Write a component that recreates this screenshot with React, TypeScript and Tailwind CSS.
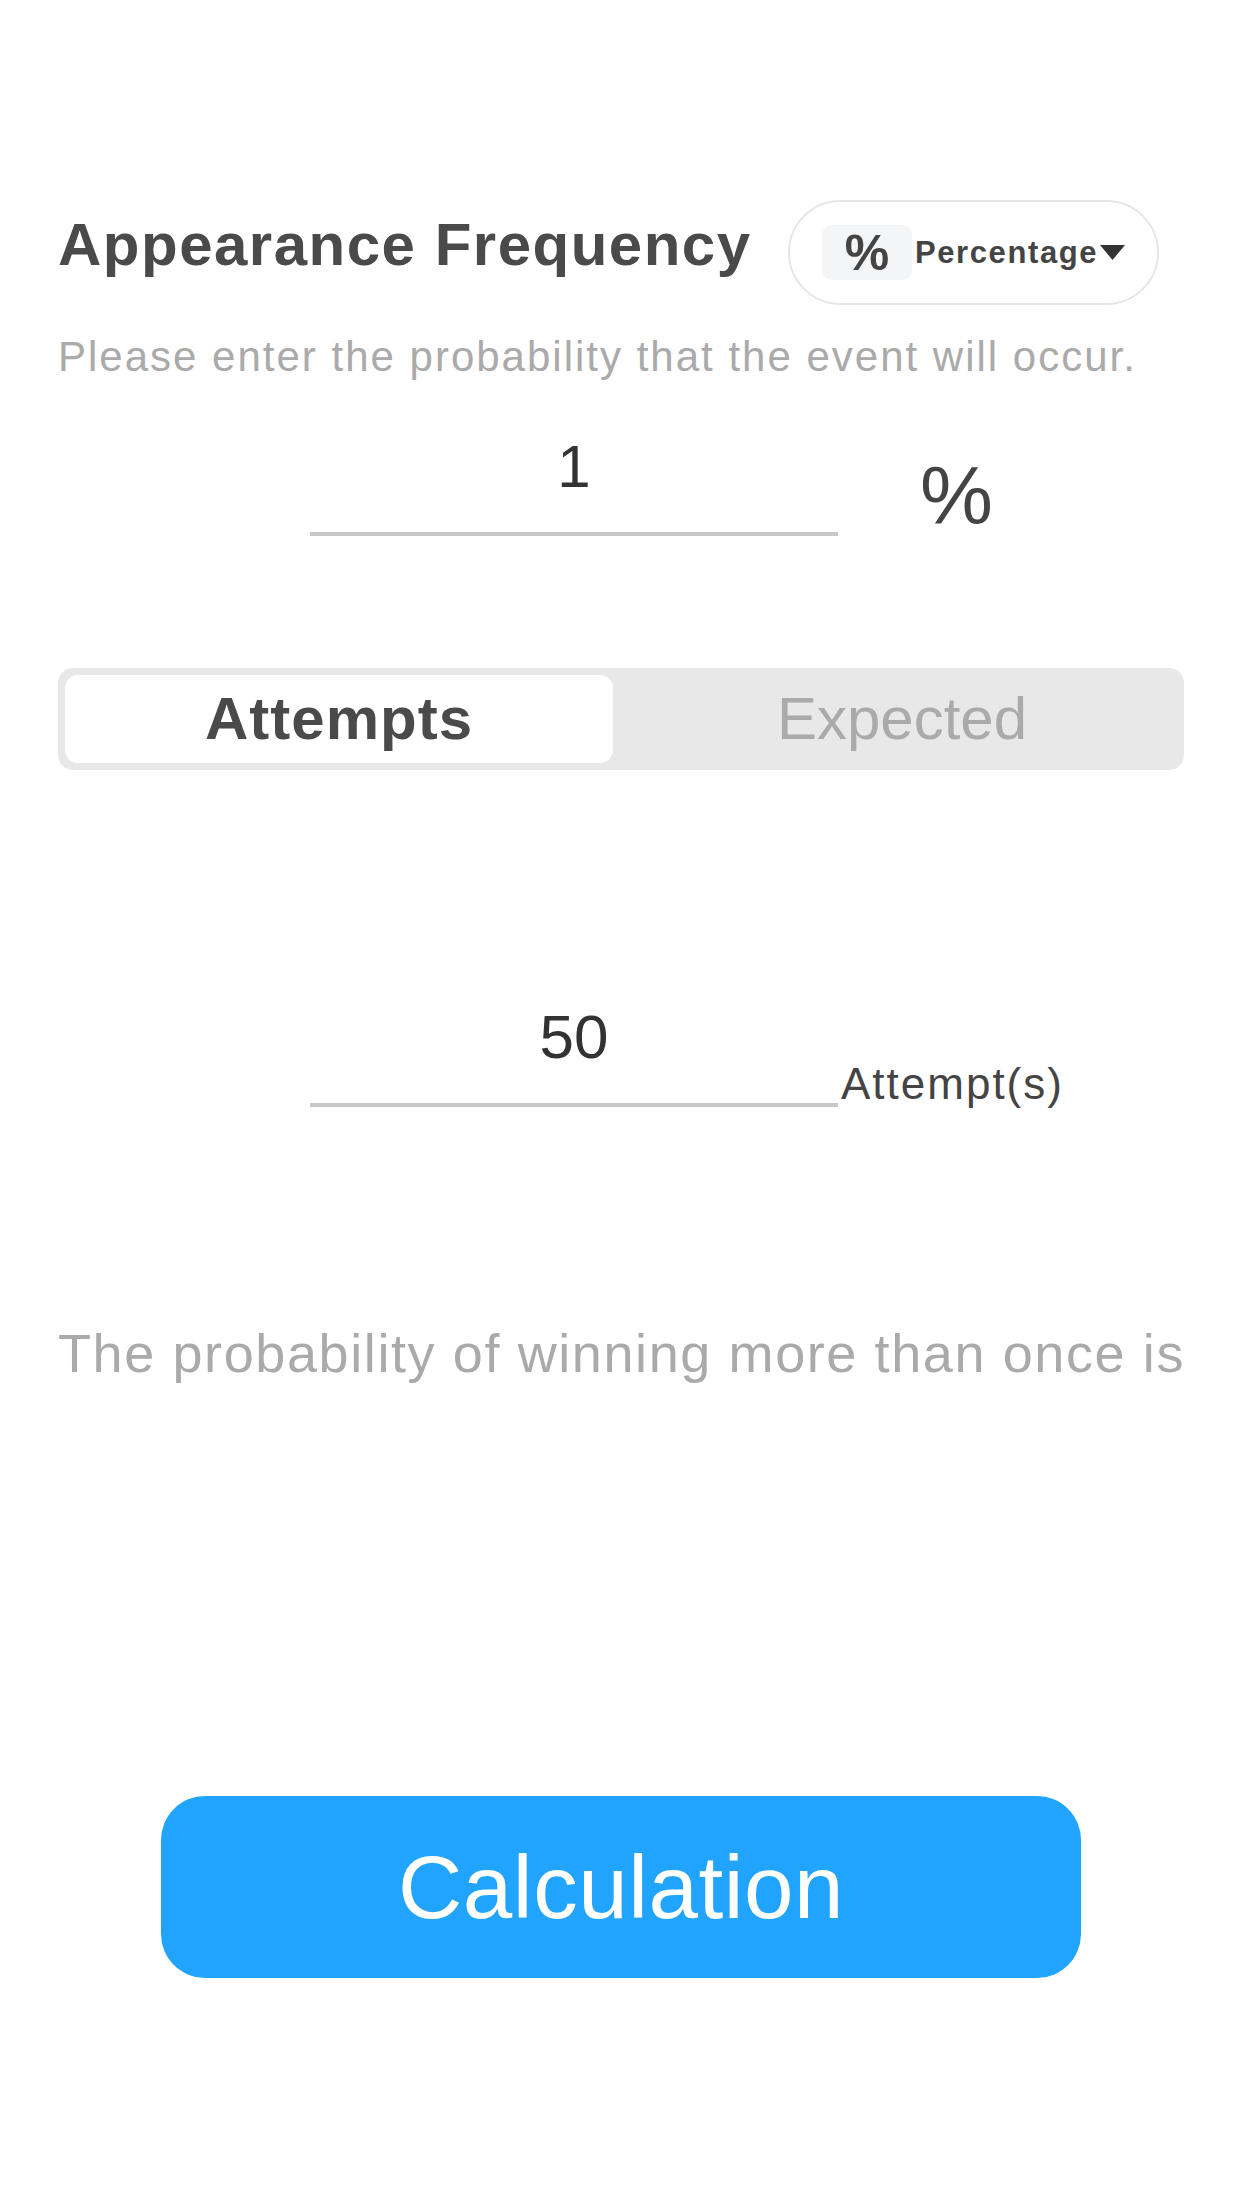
import { useState } from "react";

type Mode = "attempts" | "expected";

export default function App() {
  const [mode, setMode] = useState<Mode>("attempts");
  const [rate] = useState("1");
  const [count] = useState("50");

  return (
    <div
      className="min-h-screen w-full bg-white px-[58px] pt-[200px]"
      style={{ fontFamily: '"Liberation Sans", Arial, sans-serif' }}
    >
      <Header />

      <p className="mt-[31px] text-[42px] leading-[42px] tracking-[2px] text-[#aaaaaa]">
        Please enter the probability that the event will occur.
      </p>

      {/* probability input */}
      <div className="mt-[59px] ml-[252px] flex items-start">
        <div className="w-[528px] border-b-4 border-[#c8c8c8] pb-[35px] text-center text-[60px] leading-[60px] text-[#333333]">
          {rate}
        </div>
        <span className="mt-[18px] ml-[82px] text-[82px] leading-[82px] text-[#444444]">%</span>
      </div>

      <SegmentTabs mode={mode} onChange={setMode} />

      {/* attempts input */}
      <div className="mt-[236px] ml-[252px] flex items-end">
        <div className="w-[528px] border-b-4 border-[#c8c8c8] pb-[35px] text-center text-[62px] leading-[62px] text-[#333333]">
          {count}
        </div>
        <span className="mb-[1px] ml-[3px] text-[44px] leading-[44px] tracking-[2px] text-[#444444]">
          Attempt(s)
        </span>
      </div>

      <p className="mt-[219px] whitespace-nowrap text-[54px] leading-[54px] tracking-[1.6px] text-[#aaaaaa]">
        The probability of winning more than once is
      </p>

      <button className="mx-auto mt-[416px] flex h-[182px] w-[920px] items-center justify-center rounded-[44px] bg-[#21a4fe] text-[89px] leading-none tracking-[0.5px] text-white">
        Calculation
      </button>
    </div>
  );
}

function Header() {
  return (
    <div className="flex items-start justify-between pr-[25px]">
      <h1 className="mt-[15px] text-[60px] font-bold leading-[60px] tracking-[1.5px] text-[#4a4a4a]">
        Appearance Frequency
      </h1>
      <div className="flex h-[105px] w-[371px] items-center rounded-full border-2 border-[#e6e6e6] pl-[32px]">
        <div className="flex h-[55px] w-[90px] items-center justify-center rounded-[10px] bg-[#f4f5f7] text-[50px] font-semibold leading-none text-[#444444]">
          %
        </div>
        <span className="ml-[3px] text-[31px] font-bold leading-none tracking-[1.6px] text-[#444444]">
          Percentage
        </span>
        <svg width="25" height="15" viewBox="0 0 25 15" className="ml-[2px]">
          <polygon points="0,0 25,0 12.5,15" fill="#333333" />
        </svg>
      </div>
    </div>
  );
}

function SegmentTabs({ mode, onChange }: { mode: Mode; onChange: (m: Mode) => void }) {
  const tabs: { key: Mode; label: string }[] = [
    { key: "attempts", label: "Attempts" },
    { key: "expected", label: "Expected" },
  ];

  return (
    <div className="mt-[131px] grid h-[102px] grid-cols-[548px_1fr] rounded-[15px] bg-[#e8e8e8] p-[7px]">
      {tabs.map((t) => {
        const active = mode === t.key;
        return (
          <button
            key={t.key}
            onClick={() => onChange(t.key)}
            className={
              active
                ? "flex items-center justify-center rounded-[13px] bg-white text-[60px] font-bold leading-none tracking-[1px] text-[#4a4a4a]"
                : "flex items-center justify-center rounded-[13px] pl-[14px] text-[60px] leading-none text-[#aaaaaa]"
            }
          >
            {t.label}
          </button>
        );
      })}
    </div>
  );
}
